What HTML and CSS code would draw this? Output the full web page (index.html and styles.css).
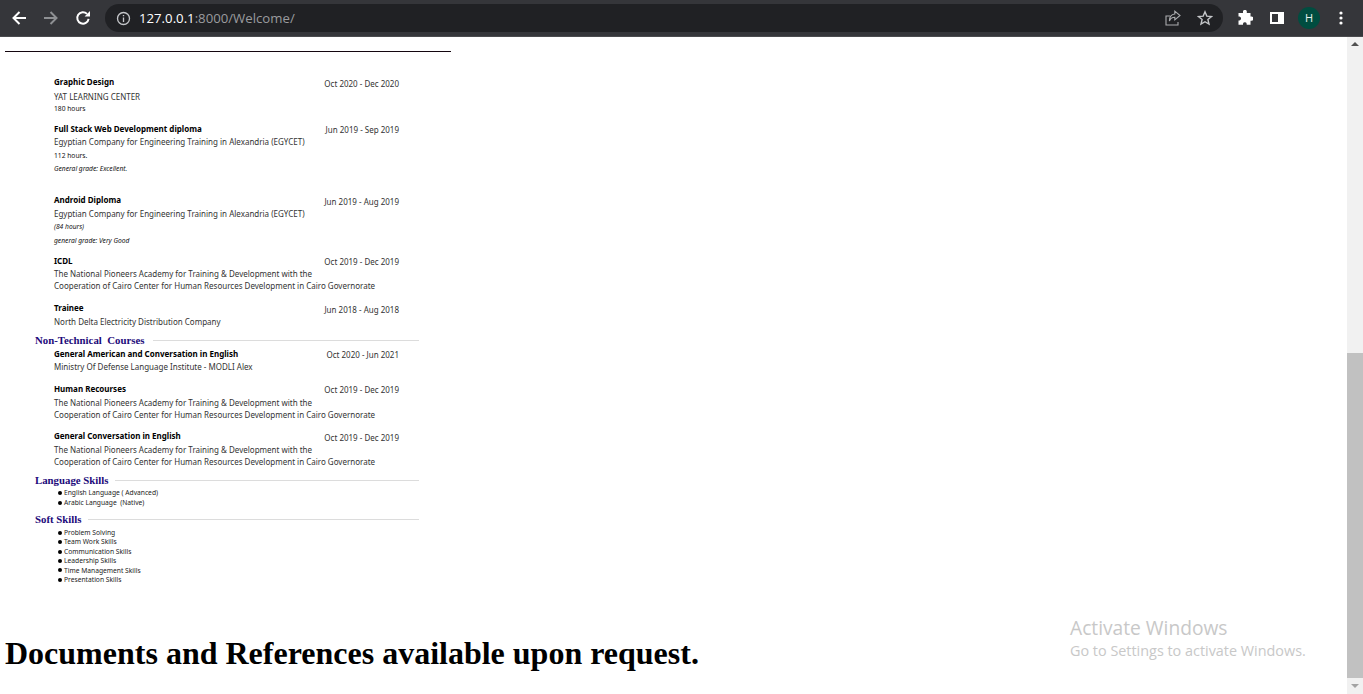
FILE: index.html
```html
<!DOCTYPE html>
<html lang="en">
    <head>
        <meta charset="UTF-8">
        <meta name="viewport" content="width=device-width, initial-scale=1.0">
        <title>Welcome</title>
        <link rel="stylesheet" href="styles.css">
    </head>

    <body>
        <div class="toolbar">
            <div class="nav-btns">
                <svg class="icon" viewBox="0 0 16 16"><path d="M15 8H3M8.500 2 2.500 8l6 6" fill="none" stroke="#fff" stroke-width="2"/></svg>
                <svg class="icon" viewBox="0 0 16 16"><path d="M1 8h12M7.500 2l6 6-6 6" fill="none" stroke="#8e9093" stroke-width="2"/></svg>
                <svg class="icon" viewBox="0 0 16 16"><path d="M13.600 8.800A5.700 5.700 0 1 1 12 3.900" fill="none" stroke="#fff" stroke-width="2"/><path d="M9.600 6.400h5.400V1z" fill="#fff"/></svg>
            </div>
            <div class="omnibox">
                <svg class="info" viewBox="0 0 16 16"><circle cx="8" cy="8" r="6.400" fill="none" stroke="#c4c6c9" stroke-width="1.400"/><path d="M7.300 7h1.400v4.600H7.300zM7.300 4.200h1.400v1.500H7.300z" fill="#c4c6c9"/></svg>
                <span class="url"><span class="host">127.0.0.1</span>:8000/Welcome/</span>
                <svg class="share" viewBox="0 0 16 16"><path d="M5 6H1v9h12v-3" fill="none" stroke="#aaacae" stroke-width="1.100"/><path d="M9.800 1.200 15 5.500l-5.200 4.300V7.200C7.200 7.200 5.400 8.400 4.400 11c0-4 2-6.600 5.400-7z" fill="none" stroke="#aaacae" stroke-width="1.100"/></svg>
                <svg class="star" viewBox="0 0 16 16"><path d="M8 1.800 9.800 6.100l4.700.4-3.600 3 1.100 4.600L8 11.700l-4 2.400 1.100-4.600-3.600-3 4.700-.4z" fill="none" stroke="#c4c6c9" stroke-width="1.400"/></svg>
            </div>
            <div class="tools">
                <svg class="tool" viewBox="0 0 16 16"><path d="M6 1.200a2 2 0 0 1 3.800 0V3h3.700v3.500h1a2.100 2.100 0 0 1 0 4.200h-1v4.100H9.700v-1a1.900 1.900 0 0 0-3.700 0v1H1.500v-4.300h1a2 2 0 0 0 0-3.900h-1V3H6z" fill="#fff"/></svg>
                <svg class="tool" viewBox="0 0 16 16"><path d="M1 2h14v12H1zM3 4v8h6V4z" fill="#fff" fill-rule="evenodd"/></svg>
                <span class="avatar">H</span>
                <svg class="kebab" viewBox="0 0 4 16"><circle cx="2" cy="3" r="1.600" fill="#fff"/><circle cx="2" cy="8" r="1.600" fill="#fff"/><circle cx="2" cy="13" r="1.600" fill="#fff"/></svg>
            </div>
        </div>

        <div class="viewport">
            <div class="page">
                <hr class="top-rule">

                <div class="entry entry-flush">
                    <div class="row"><span class="name">Graphic Design</span><span class="date date-low">Oct 2020 - Dec 2020</span></div>
                    <div class="org org-low">YAT LEARNING CENTER</div>
                    <div class="note">180 hours</div>
                </div>
                <div class="entry">
                    <div class="row"><span class="name">Full Stack Web Development diploma</span><span class="date">Jun 2019 - Sep 2019</span></div>
                    <div class="org org-tight">Egyptian Company for Engineering Training in Alexandria (EGYCET)</div>
                    <div class="note">112 hours.</div>
                    <div class="grade">General grade: Excellent.</div>
                </div>
                <div class="entry entry-far">
                    <div class="row"><span class="name">Android Diploma</span><span class="date date-low">Jun 2019 - Aug 2019</span></div>
                    <div class="org">Egyptian Company for Engineering Training in Alexandria (EGYCET)</div>
                    <div class="note note-tight note-italic">(84 hours)</div>
                    <div class="grade grade-low">general grade: Very Good</div>
                </div>
                <div class="entry">
                    <div class="row"><span class="name">ICDL</span><span class="date">Oct 2019 - Dec 2019</span></div>
                    <div class="org org-tight">The National Pioneers Academy for Training &amp; Development with the<br>Cooperation of Cairo Center for Human Resources Development in Cairo Governorate</div>
                </div>
                <div class="entry entry-wide">
                    <div class="row"><span class="name">Trainee</span><span class="date date-low">Jun 2018 - Aug 2018</span></div>
                    <div class="org">North Delta Electricity Distribution Company</div>
                </div>

                <div class="section"><span class="section-name">Non-Technical&nbsp; Courses&nbsp;</span></div>
                <div class="entry entry-flush">
                    <div class="row"><span class="name">General American and Conversation in English</span><span class="date">Oct 2020 - Jun 2021</span></div>
                    <div class="org org-tight">Ministry Of Defense Language Institute - MODLI Alex</div>
                </div>
                <div class="entry entry-wide">
                    <div class="row"><span class="name">Human Recourses</span><span class="date">Oct 2019 - Dec 2019</span></div>
                    <div class="org">The National Pioneers Academy for Training &amp; Development with the<br>Cooperation of Cairo Center for Human Resources Development in Cairo Governorate</div>
                </div>
                <div class="entry">
                    <div class="row"><span class="name">General Conversation in English</span><span class="date date-low">Oct 2019 - Dec 2019</span></div>
                    <div class="org">The National Pioneers Academy for Training &amp; Development with the<br>Cooperation of Cairo Center for Human Resources Development in Cairo Governorate</div>
                </div>

                <div class="section"><span class="section-name">Language Skills</span></div>
                <ul class="skills skills-lang">
                    <li>English Language ( Advanced)</li>
                    <li>Arabic Language&nbsp; (Native)</li>
                </ul>

                <div class="section"><span class="section-name">Soft Skills</span></div>
                <ul class="skills skills-soft">
                    <li>Problem Solving</li>
                    <li>Team Work Skills</li>
                    <li>Communication Skills</li>
                    <li>Leadership Skills</li>
                    <li>Time Management Skills</li>
                    <li>Presentation Skills</li>
                </ul>

                <h1 class="closing">Documents and References available upon request.</h1>
            </div>

            <div class="scrollbar">
                <div class="arrow arrow-up"></div>
                <div class="track"><div class="thumb"></div></div>
                <div class="arrow arrow-down"></div>
            </div>

            <div class="watermark">
                <div class="wm-title">Activate Windows</div>
                <div class="wm-sub">Go to Settings to activate Windows.</div>
            </div>
        </div>
    </body>
</html>
```

FILE: styles.css
```css
html, body{
    margin: 0;
    height: 694px;
    overflow: hidden;
    background-color: #fff;
}
.toolbar{
    height: 36px;
    background-color: #35363a;
    border-bottom: 1px solid #4a4b4e;
    display: flex;
    align-items: center;
    font-family: "Open Sans", "Noto Sans", sans-serif;
}
.nav-btns{
    display: flex;
    gap: 16px;
    padding-left: 11px;
    width: 94px;
    box-sizing: border-box;
}
.icon{
    width: 16px;
    height: 16px;
}
.omnibox{
    width: 1118px;
    height: 28px;
    margin-left: 11px;
    border-radius: 14px;
    background-color: #202124;
    display: flex;
    align-items: center;
    padding: 0 10px 0 11px;
    box-sizing: border-box;
}
.info{
    width: 15px;
    height: 15px;
}
.url{
    margin-left: 8px;
    flex: 1;
    font-size: 13.200px;
    color: #9a9b9e;
}
.host{
    color: #fff;
}
.share{
    width: 16px;
    height: 16px;
    margin-right: 16px;
}
.star{
    width: 16px;
    height: 16px;
}
.tools{
    display: flex;
    align-items: center;
    padding-left: 14px;
}
.tool{
    width: 16px;
    height: 16px;
    margin-right: 16px;
}
.avatar{
    width: 22px;
    height: 22px;
    margin-left: -3px;
    border-radius: 50%;
    background-color: #004d40;
    color: #e8f0ee;
    font-size: 11px;
    line-height: 22px;
    text-align: center;
}
.kebab{
    width: 4px;
    height: 16px;
    margin-left: 19px;
}
.viewport{
    position: relative;
    display: flex;
    height: 657px;
}
.page{
    flex: 1;
    padding: 14px 0 0 5px;
    font-family: "Noto Sans", sans-serif;
    color: #222;
}
.top-rule{
    width: 446px;
    height: 1px;
    margin: 0 0 23px 0;
    border: 0;
    background-color: #14060f;
}
.entry{
    width: 345px;
    margin: 7px 0 0 49px;
}
.entry-wide{
    margin-top: 8px;
}
.entry-far{
    margin-top: 18px;
}
.entry-flush{
    margin-top: 0;
}
.row{
    display: flex;
    justify-content: space-between;
    height: 15px;
    line-height: 14px;
}
.name{
    font-size: 8px;
    font-weight: 700;
    color: #000;
}
.date{
    font-size: 8px;
    color: #333;
    margin-top: 1px;
}
.date-low{
    margin-top: 2px;
}
.org{
    font-size: 8px;
    line-height: 12px;
    padding-bottom: 1px;
    color: #333;
}
.org-tight{
    margin-top: -1px;
}
.org-low{
    margin-top: 1px;
    padding-bottom: 0;
    margin-bottom: -1px;
}
.note{
    font-size: 6.700px;
    line-height: 12px;
    margin-top: 1px;
    color: #111;
}
.note-tight{
    margin-top: 0;
}
.note-italic{
    font-style: italic;
}
.grade{
    font-size: 6.700px;
    font-style: italic;
    line-height: 12px;
    margin-top: 1px;
    color: #111;
}
.grade-low{
    margin-top: 2px;
}
.section{
    width: 384px;
    margin: 4px 0 0 30px;
    display: flex;
    align-items: center;
    gap: 6px;
    height: 14px;
}
.section::after{
    content: "";
    flex: 1;
    height: 1px;
    background-color: #dcdcdc;
}
.section-name{
    font-family: "Liberation Serif", serif;
    font-size: 10.800px;
    font-weight: 700;
    color: #1c0a7a;
}
.skills{
    margin: 0 0 0 53px;
    padding: 0;
    list-style: none;
    font-size: 6.700px;
    color: #222;
}
.skills li{
    display: flex;
    align-items: center;
    gap: 2px;
}
.skills li::before{
    content: "";
    width: 4px;
    height: 4px;
    border-radius: 50%;
    background-color: #000;
}
.skills-lang{
    margin-top: 1px;
    line-height: 10px;
}
.skills-soft{
    margin-top: 2px;
    line-height: 9.400px;
}
.closing{
    margin: 51px 0 0 0;
    font-family: "Liberation Serif", serif;
    font-size: 32px;
    line-height: 37px;
    color: #000;
}
.scrollbar{
    width: 16px;
    background-color: #f1f1f1;
    display: flex;
    flex-direction: column;
}
.arrow{
    height: 16px;
    position: relative;
}
.arrow::after{
    content: "";
    position: absolute;
    left: 4px;
    border-left: 4px solid transparent;
    border-right: 4px solid transparent;
}
.arrow-up::after{
    top: 5px;
    border-bottom: 4px solid #505050;
}
.arrow-down::after{
    top: 6px;
    border-top: 4px solid #a3a3a3;
}
.track{
    flex: 1;
    display: flex;
    flex-direction: column;
    justify-content: flex-end;
}
.thumb{
    height: 325px;
    background-color: #c1c1c1;
}
.watermark{
    position: absolute;
    left: 1070px;
    top: 578px;
    font-family: "Open Sans", "Noto Sans", sans-serif;
    color: #c8c8c8;
}
.wm-title{
    font-size: 19.200px;
    line-height: 26px;
}
.wm-sub{
    font-size: 14.400px;
    line-height: 20px;
}
```
